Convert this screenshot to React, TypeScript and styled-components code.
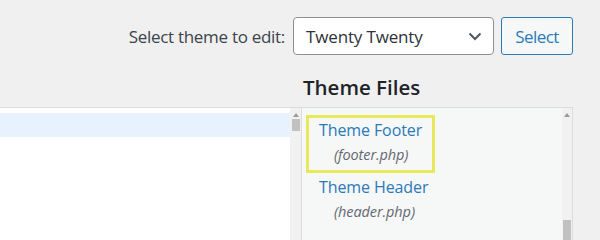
import React from "react";
import styled, { createGlobalStyle } from "styled-components";

const GlobalStyle = createGlobalStyle`
  html, body {
    margin: 0;
    padding: 0;
    background: #f0f0f1;
  }
  body {
    font-family: "Open Sans", "Noto Sans", sans-serif;
    color: #3c434a;
  }
  * {
    box-sizing: border-box;
  }
`;

const Page = styled.div`
  width: 600px;
  height: 100vh;
  min-height: 229px;
  overflow: hidden;
  display: flex;
  flex-direction: column;
  padding: 17px 27px 0 0;
`;

const ThemePicker = styled.form`
  display: flex;
  justify-content: flex-end;
  align-items: center;
  gap: 7px;
  height: 38px;
  margin: 0;
`;

const PickerLabel = styled.label`
  font-size: 17px;
  color: #3c434a;
  margin-right: 1px;
  letter-spacing: -0.3px;
`;

const SelectBox = styled.div`
  width: 201px;
  height: 38px;
  display: flex;
  align-items: center;
  justify-content: space-between;
  padding: 0 11px 0 12px;
  background: #fff;
  border: 1px solid #8c8f94;
  border-radius: 4px;
  font-size: 17px;
  letter-spacing: -0.15px;
  color: #2c3338;
`;

const SelectButton = styled.button`
  width: 72px;
  height: 38px;
  padding: 0;
  background: #f6f7f7;
  border: 1px solid #2a7ab8;
  border-radius: 3px;
  color: #2a7ab8;
  font-family: inherit;
  font-size: 17px;
  letter-spacing: -0.6px;
`;

const EditorLayout = styled.div`
  flex: 1;
  display: grid;
  grid-template-columns: 302px 271px;
  grid-template-rows: 52px 1fr;
  grid-template-areas:
    ". heading"
    "editor files";
`;

const Heading = styled.h2`
  grid-area: heading;
  margin: 0;
  padding: 0 0 6px 1px;
  align-self: end;
  font-size: 20.5px;
  font-weight: 600;
  color: #1d2327;
  line-height: 1.3;
`;

const Editor = styled.div`
  grid-area: editor;
  display: flex;
  border-top: 1px solid #dcdcde;
  border-right: 1px solid #dcdcde;
  background: #fff;
`;

const CodeLines = styled.div`
  flex: 1;
  padding-top: 5px;
`;

const ActiveLine = styled.div`
  height: 24px;
  background: #e8f2fe;
`;

const Scrollbar = styled.div<{ $narrow?: boolean }>`
  width: ${(p) => (p.$narrow ? "10px" : "11px")};
  display: flex;
  flex-direction: column;
  align-items: center;
  padding-top: 5px;
  background: #f1f1f1;
`;

const ScrollArrow = styled.span`
  width: 0;
  height: 0;
  border-left: 3px solid transparent;
  border-right: 3px solid transparent;
  border-bottom: 4px solid #9a9a9a;
`;

const ScrollThumb = styled.span<{ $offset: number; $length: number }>`
  width: 8px;
  height: ${(p) => p.$length}px;
  margin-top: ${(p) => p.$offset}px;
  background: #c1c1c1;
`;

const FileList = styled.div`
  grid-area: files;
  display: flex;
  border-top: 1px solid #dcdcde;
  border-right: 1px solid #dcdcde;
  background: #f6f7f7;
`;

const FileItems = styled.ul`
  flex: 1;
  list-style: none;
  margin: 0;
  padding: 7px 0 0 4px;
`;

const FileItem = styled.li<{ $highlighted?: boolean }>`
  width: fit-content;
  height: 58px;
  margin-bottom: -1px;
  padding: 0 10px;
  border: 3px solid ${(p) => (p.$highlighted ? "#e8e85c" : "transparent")};
`;

const FileName = styled.a`
  display: block;
  font-size: 16px;
  line-height: 24px;
  color: #2a7ab8;
  text-decoration: none;
  letter-spacing: -0.1px;
`;

const FilePath = styled.span`
  display: block;
  padding-left: 15px;
  font-size: 14.5px;
  line-height: 26px;
  font-style: italic;
  letter-spacing: -0.1px;
  color: #646970;
`;

const Chevron = () => (
  <svg width="14" height="9" viewBox="0 0 14 9" fill="none">
    <path d="M1.5 1.5l5.5 5.5 5.5-5.5" stroke="#50575e" strokeWidth="2" />
  </svg>
);

const files = [
  { name: "Theme Footer", path: "footer.php", highlighted: true },
  { name: "Theme Header", path: "header.php" },
];

export default function App() {
  return (
    <Page>
      <GlobalStyle />
      <ThemePicker>
        <PickerLabel>Select theme to edit:</PickerLabel>
        <SelectBox>
          Twenty Twenty
          <Chevron />
        </SelectBox>
        <SelectButton type="button">Select</SelectButton>
      </ThemePicker>
      <EditorLayout>
        <Heading>Theme Files</Heading>
        <Editor>
          <CodeLines>
            <ActiveLine />
          </CodeLines>
          <Scrollbar>
            <ScrollArrow />
            <ScrollThumb $offset={2} $length={12} />
          </Scrollbar>
        </Editor>
        <FileList>
          <FileItems>
            {files.map((f) => (
              <FileItem key={f.path} $highlighted={f.highlighted}>
                <FileName href="#">{f.name}</FileName>
                <FilePath>({f.path})</FilePath>
              </FileItem>
            ))}
          </FileItems>
          <Scrollbar $narrow>
            <ScrollArrow />
            <ScrollThumb $offset={103} $length={24} />
          </Scrollbar>
        </FileList>
      </EditorLayout>
    </Page>
  );
}
